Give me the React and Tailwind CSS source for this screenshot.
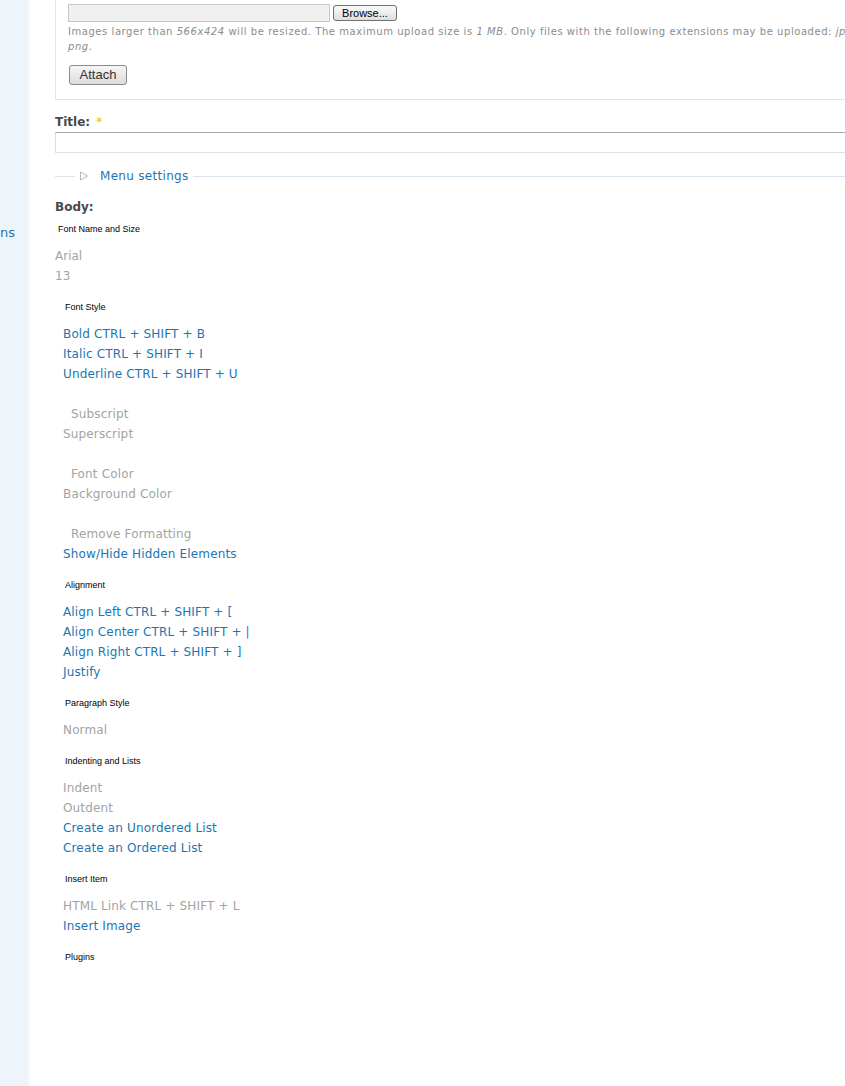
import React from 'react';

const BLUE = 'text-[#1b76b3]';
const GRAY = 'text-[#a3a3a3]';

const groups = [
    {
        title: 'Font Style',
        items: [
            { label: 'Bold CTRL + SHIFT + B', link: true },
            { label: 'Italic CTRL + SHIFT + I', link: true },
            { label: 'Underline CTRL + SHIFT + U', link: true },
            { label: '' },
            { label: 'Subscript', indent: true },
            { label: 'Superscript' },
            { label: '' },
            { label: 'Font Color', indent: true },
            { label: 'Background Color' },
            { label: '' },
            { label: 'Remove Formatting', indent: true },
            { label: 'Show/Hide Hidden Elements', link: true },
        ],
    },
    {
        title: 'Alignment',
        items: [
            { label: 'Align Left CTRL + SHIFT + [', link: true },
            { label: 'Align Center CTRL + SHIFT + |', link: true },
            { label: 'Align Right CTRL + SHIFT + ]', link: true },
            { label: 'Justify', link: true },
        ],
    },
    {
        title: 'Paragraph Style',
        items: [{ label: 'Normal' }],
    },
    {
        title: 'Indenting and Lists',
        items: [
            { label: 'Indent' },
            { label: 'Outdent' },
            { label: 'Create an Unordered List', link: true },
            { label: 'Create an Ordered List', link: true },
        ],
    },
    {
        title: 'Insert Item',
        items: [
            { label: 'HTML Link CTRL + SHIFT + L' },
            { label: 'Insert Image', link: true },
        ],
    },
    { title: 'Plugins', items: [] },
];

function SmallHeading({ children, className = '' }) {
    return (
        <div className={'text-[9px] leading-[12px] text-black ' + className} style={{ fontFamily: '"Liberation Sans", Arial, sans-serif' }}>
            {children}
        </div>
    );
}

function ItemRow({ item }) {
    if (!item.label) return <div className="h-[20px]" />;
    return (
        <div className={'h-[20px] leading-[20px] text-[12px] tracking-[0.15px] ' + (item.link ? BLUE : GRAY) + (item.indent ? ' pl-[8px]' : '')}>
            {item.label}
        </div>
    );
}

export default function App() {
    return (
        <div className="flex w-[845px] min-h-[1086px] overflow-hidden bg-white" style={{ fontFamily: '"DejaVu Sans", Verdana, sans-serif' }}>
            {/* Sidebar */}
            <div className="w-[30px] shrink-0 bg-[#edf5fa] border-r-[3px] border-[#f4f8fb] relative">
                <div className={'absolute left-0 top-[224px] text-[13px] leading-[18px] ' + BLUE}>ns</div>
            </div>

            {/* Main */}
            <div className="shrink-0 w-[900px] pl-[25px]">
                {/* Upload fieldset */}
                <div className="border-l border-b border-[#dbe6ee] pl-[12px] pt-[4px] pb-[13px]">
                    <div className="flex items-start gap-[3px]">
                        <div className="w-[262px] h-[18px] bg-[#f0f0f0] border border-[#c8c8c8]" />
                        <button className="mt-[1px] w-[64px] h-[16px] text-[11px] leading-[14px] text-black bg-gradient-to-b from-[#fafafa] to-[#dedede] border border-[#707070] rounded-[3px]" style={{ fontFamily: '"Liberation Sans", Arial, sans-serif' }}>
                            Browse...
                        </button>
                    </div>
                    <p className="mt-[2px] text-[10px] leading-[15px] text-[#8c8c8c] tracking-[0.55px] whitespace-nowrap">
                        Images larger than <em>566x424</em> will be resized. The maximum upload size is <em>1 MB</em>. Only files with the following extensions may be uploaded: <em>jpg jpeg gif</em>
                        <br />
                        <em>png</em>.
                    </p>
                    <button className="mt-[11px] ml-[1px] w-[58px] h-[20px] text-[13px] leading-[18px] text-[#333] bg-gradient-to-b from-[#f6f6f6] to-[#dcdcdc] border border-[#8a8a8a] rounded-[3px]" style={{ fontFamily: '"Liberation Sans", Arial, sans-serif' }}>
                        Attach
                    </button>
                </div>

                {/* Title */}
                <div className="mt-[14px] h-[16px] leading-[16px] text-[12px] font-bold text-[#494949]">
                    Title: <span className="text-[#ffae00] font-normal ml-[2px]">*</span>
                </div>
                <div className="mt-[2px] h-[21px] border border-[#e0e0e0] border-t-[#a8a8a8]" />

                {/* Menu settings */}
                <div className="mt-[15px] h-[16px] flex items-center">
                    <div className="w-[20px] h-px bg-[#d9e4ec]" />
                    <svg width="10" height="10" viewBox="0 0 10 10" className="ml-[4px] mr-[11px]">
                        <path d="M1.5 1 L8.5 5 L1.5 9 Z" fill="none" stroke="#b8b8b8" strokeWidth="1" />
                    </svg>
                    <span className={'text-[12px] leading-[16px] tracking-[0.3px] ' + BLUE}>Menu settings</span>
                    <div className="flex-1 ml-[4px] h-px bg-[#d9e4ee]" />
                </div>

                {/* Body */}
                <div className="mt-[15px] h-[16px] leading-[16px] text-[12px] font-bold text-[#494949]">Body:</div>
                <SmallHeading className="mt-[8px] pl-[3px]">Font Name and Size</SmallHeading>
                <div className={'mt-[11px] h-[20px] leading-[20px] text-[12px] ' + GRAY}>Arial</div>
                <div className={'h-[20px] leading-[20px] text-[12px] ' + GRAY}>13</div>

                <div className="pl-[8px]">
                    {groups.map((g) => (
                        <div key={g.title}>
                            <SmallHeading className="mt-[15px] pl-[2px]">{g.title}</SmallHeading>
                            {g.items.length > 0 && (
                                <div className="mt-[11px]">
                                    {g.items.map((it, i) => (
                                        <ItemRow key={i} item={it} />
                                    ))}
                                </div>
                            )}
                        </div>
                    ))}
                </div>
            </div>
        </div>
    );
}
